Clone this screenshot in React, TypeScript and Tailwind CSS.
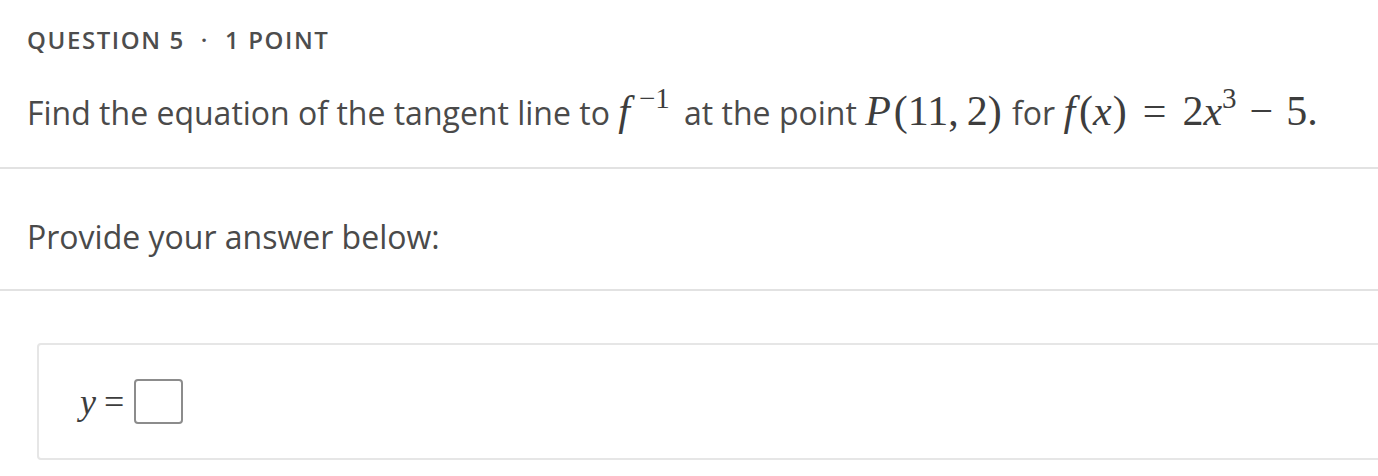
import React from "react";

const M = ({ children }: { children: React.ReactNode }) => (
  <span className="font-['Liberation_Serif',serif] text-[42px] leading-none text-[#3d3d3d]">{children}</span>
);
const I = ({ children }: { children: React.ReactNode }) => <i className="italic">{children}</i>;
const Sup = ({ children }: { children: React.ReactNode }) => (
  <span className="text-[29px] relative top-[-17px] leading-none">{children}</span>
);

export default function App() {
  return (
    <div className="w-[1378px] h-[476px] overflow-hidden bg-white font-['Open_Sans',sans-serif] text-[#4a4a4a]">
      <div className="h-[80px] flex items-center px-[27px]">
        <span className="text-[24px] font-semibold tracking-[1.6px] text-[#4d4d4d]">
          QUESTION 5<span className="mx-[16px]">·</span>1 POINT
        </span>
      </div>
      <div className="pb-[21px] border-b-2 border-[#e2e2e2]">
        <div className="h-[66px] flex items-center px-[27px] text-[32px] whitespace-nowrap">
          <span>
            Find the equation of the tangent line to{" "}
            <M>
              <I>f</I>
              <span className="ml-[9px] mr-[6px]">
                <Sup>−1</Sup>
              </span>
            </M>{" "}
            at the point{" "}
            <M>
              <I>P</I>
              <span className="ml-[3px]">(11,</span>
              <span className="ml-[8px]">2)</span>
            </M>{" "}
            <span className="ml-[2px]">for</span>{" "}
            <M>
              <I>f</I>
              <span className="ml-[4px]">(</span>
              <I>x</I>
              <span className="ml-[1px]">)</span>
              <span className="mx-[16px]">=</span>2<I>x</I>
              <Sup>3</Sup>
              <span className="mx-[13px]">−</span>5.
            </M>
          </span>
        </div>
      </div>
      <div className="pt-[16px] border-b-2 border-[#e2e2e2]">
        <div className="h-[104px] flex items-center px-[27px] text-[32px]">Provide your answer below:</div>
      </div>
      <div className="mt-[52px] ml-[37px] w-[1400px] h-[117px] border-2 border-[#e6e6e6] rounded-[4px] flex items-center pl-[41px]">
        <span className="font-['Liberation_Serif',serif] text-[36px] text-[#3d3d3d] leading-none">
          <I>y</I>
          <span className="ml-[8px]">=</span>
        </span>
        <div className="ml-[10px] w-[49px] h-[45px] border-2 border-[#8c8c8c] rounded-[4px]" />
      </div>
    </div>
  );
}
